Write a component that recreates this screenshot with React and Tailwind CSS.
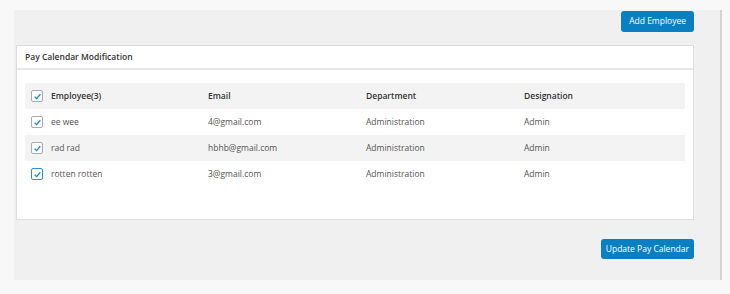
import React from "react";

function Check({ focus }) {
  return (
    <span
      className={`flex h-[12px] w-[12px] items-center justify-center rounded-[2px] border bg-white ${
        focus ? "border-[#2a8fd0] border-[1.5px]" : "border-[#a8acb0]"
      }`}
    >
      <svg viewBox="0 0 12 12" className="h-[9px] w-[9px]">
        <path d="M2.2 6.2 L4.9 8.8 L9.8 3" fill="none" stroke="#1e8cd8" strokeWidth="1.8" />
      </svg>
    </span>
  );
}

const rows = [
  ["ee wee", "4@gmail.com", "Administration", "Admin"],
  ["rad rad", "hbhb@gmail.com", "Administration", "Admin"],
  ["rotten rotten", "3@gmail.com", "Administration", "Admin"],
];

function Row({ cells, head, gray, focus }) {
  return (
    <div
      className={`grid h-[26px] grid-cols-[26px_157px_158px_158px_1fr] items-center ${
        gray ? "bg-[#f3f3f3]" : "bg-white"
      } ${head ? "font-semibold text-[#333]" : "text-[#555]"}`}
    >
      <div className="flex pl-[6px]">
        <Check focus={focus} />
      </div>
      {cells.map((c, i) => (
        <div key={i}>{c}</div>
      ))}
    </div>
  );
}

export default function App() {
  return (
    <div
      className="h-[294px] w-[730px] bg-[#f8f8f8] pt-[10px] pl-[14px]"
      style={{ fontFamily: '"Open Sans", sans-serif' }}
    >
      <div className="flex h-[270px] w-[708px] border-r-2 border-[#d4d4d4] bg-[#f0f0f0]">
        <div className="flex w-[680px] flex-col pl-[2px]">
          <div className="flex h-[35px] justify-end pt-[1px]">
            <button className="h-[21px] rounded-[3px] bg-[#0a7fc2] px-[8px] text-[8.5px] text-white">
              Add Employee
            </button>
          </div>
          <div className="h-[175px] border border-[#dcdcdc] bg-white text-[8.5px]">
            <div className="flex h-[24px] items-center border-b-2 border-[#e8e8e8] pl-[8px] font-semibold text-[#333]">
              Pay Calendar Modification
            </div>
            <div className="mx-[8px] mt-[13px]">
              <Row head gray cells={["Employee(3)", "Email", "Department", "Designation"]} />
              <Row cells={rows[0]} />
              <Row gray cells={rows[1]} />
              <Row focus cells={rows[2]} />
            </div>
          </div>
          <div className="flex justify-end pt-[19px]">
            <button className="h-[20px] rounded-[3px] bg-[#0a7fc2] px-[5px] text-[8.5px] text-white">
              Update Pay Calendar
            </button>
          </div>
        </div>
      </div>
    </div>
  );
}
